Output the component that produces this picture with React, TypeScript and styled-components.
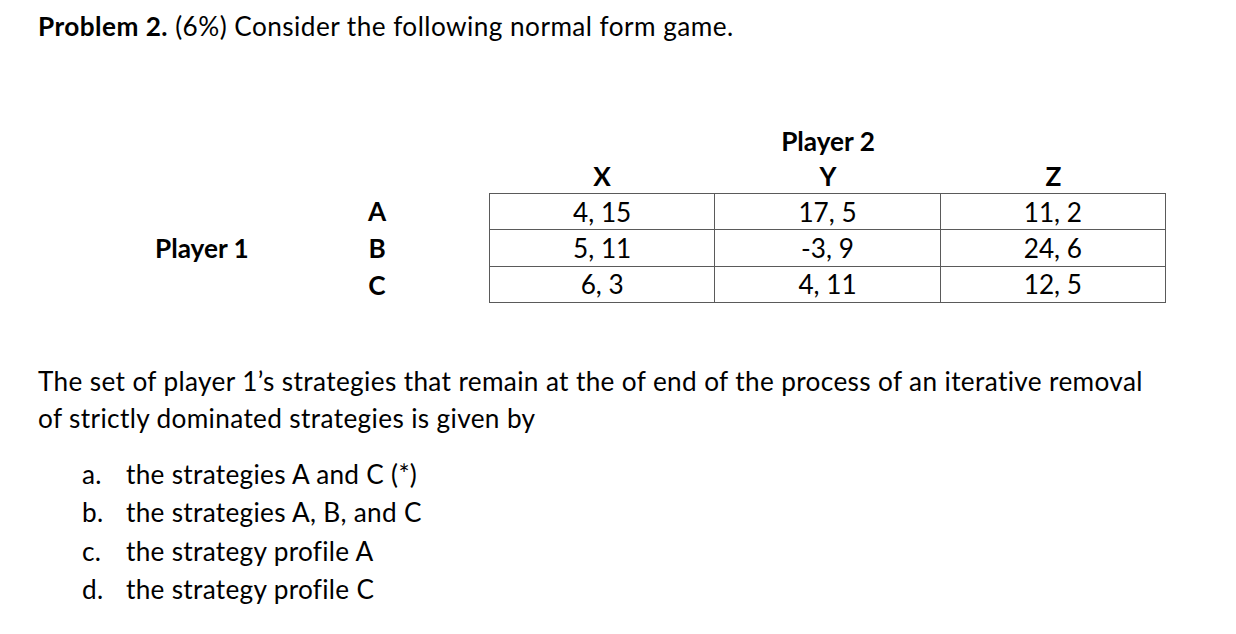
import styled, { createGlobalStyle } from 'styled-components';

const GlobalStyle = createGlobalStyle`
  html, body {
    margin: 0;
    padding: 0;
    background: #ffffff;
  }
  body {
    font-family: Lato, "Open Sans", sans-serif;
    color: #000000;
  }
`;

const Page = styled.div`
  width: 1236px;
  height: 634px;
  padding: 8px 0 0 38px;
  box-sizing: border-box;
  font-size: 26.2px;
  line-height: 37px;
  letter-spacing: 0.3px;
`;

const Title = styled.div`
  margin: 0;
  letter-spacing: 0.45px;
`;

const Bold = styled.b`
  font-weight: 700;
`;

const Matrix = styled.div`
  margin-top: 77px;
  display: grid;
  grid-template-columns: 262px 154px 35px 226px 226px 225px;
  grid-template-rows: 38px 33px 110px;
  letter-spacing: 0;
`;

const Heading = styled.div<{ $col: number; $row: number }>`
  grid-column: ${p => p.$col};
  grid-row: ${p => p.$row};
  font-weight: 700;
  text-align: center;
  align-self: center;
`;

const PlayerOne = styled.div`
  grid-column: 1;
  grid-row: 3;
  align-self: center;
  padding-left: 117px;
  font-weight: 700;
`;

const Letters = styled.div`
  grid-column: 2;
  grid-row: 3;
  display: grid;
  grid-template-rows: repeat(3, minmax(0, 1fr));
  font-weight: 700;
  text-align: center;
  align-items: center;
  line-height: 1;
`;

const Payoffs = styled.div`
  grid-column: 4 / span 3;
  grid-row: 3;
  display: grid;
  grid-template-columns: repeat(3, 1fr);
  grid-template-rows: repeat(3, minmax(0, 1fr));
  gap: 1px;
  background: #5a5a5a;
  border: 1px solid #5a5a5a;
`;

const Cell = styled.div`
  background: #ffffff;
  display: flex;
  align-items: center;
  justify-content: center;
  line-height: 1;
`;

const Paragraph = styled.p`
  margin: 60px 0 0;
  white-space: nowrap;
  letter-spacing: 0.36px;
`;

const Options = styled.ol`
  margin: 18px 0 0;
  padding: 0 0 0 44px;
  list-style: none;
`;

const Option = styled.li`
  display: flex;
  line-height: 38.3px;
`;

const Marker = styled.span`
  width: 44px;
`;

const payoffs = [
  ['4, 15', '17, 5', '11, 2'],
  ['5, 11', '-3, 9', '24, 6'],
  ['6, 3', '4, 11', '12, 5'],
];

const options = [
  ['a.', 'the strategies A and C (*)'],
  ['b.', 'the strategies A, B, and C'],
  ['c.', 'the strategy profile A'],
  ['d.', 'the strategy profile C'],
];

const App = () => {
  return (
    <Page>
      <GlobalStyle />
      <Title>
        <Bold>Problem 2.</Bold> (6%) Consider the following normal form game.
      </Title>
      <Matrix>
        <Heading $col={5} $row={1}>Player 2</Heading>
        <Heading $col={4} $row={2}>X</Heading>
        <Heading $col={5} $row={2}>Y</Heading>
        <Heading $col={6} $row={2}>Z</Heading>
        <PlayerOne>Player 1</PlayerOne>
        <Letters>
          <span>A</span>
          <span>B</span>
          <span>C</span>
        </Letters>
        <Payoffs>
          {payoffs.flat().map((v, i) => (
            <Cell key={i}>{v}</Cell>
          ))}
        </Payoffs>
      </Matrix>
      <Paragraph>
        The set of player 1’s strategies that remain at the of end of the process of an iterative removal
        <br />
        of strictly dominated strategies is given by
      </Paragraph>
      <Options>
        {options.map(([m, t]) => (
          <Option key={m}>
            <Marker>{m}</Marker>
            <span>{t}</span>
          </Option>
        ))}
      </Options>
    </Page>
  );
};

export default App;
